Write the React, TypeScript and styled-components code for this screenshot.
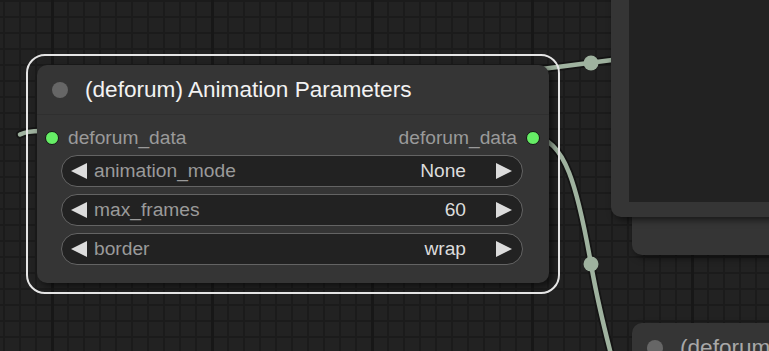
import styled, { createGlobalStyle } from 'styled-components';

const GlobalStyle = createGlobalStyle`
  html, body {
    margin: 0;
    padding: 0;
    background: #222;
  }
  body {
    font-family: 'Liberation Sans', Arial, sans-serif;
  }
`;

const LINK = '#9fb29f';
const LINK_BORDER = '#141414';

type Widget = { label: string; value: string };

const widgets: Widget[] = [
  { label: 'animation_mode', value: 'None' },
  { label: 'max_frames', value: '60' },
  { label: 'border', value: 'wrap' },
];

function Arrow({ dir }: { dir: 'left' | 'right' }) {
  return (
    <ArrowIcon viewBox="0 0 16 16">
      {dir === 'left' ? <polygon points="16,0 16,16 0,8" /> : <polygon points="0,0 0,16 16,8" />}
    </ArrowIcon>
  );
}

function Link({ d }: { d: string }) {
  return (
    <g fill="none" strokeLinecap="round">
      <path d={d} stroke={LINK_BORDER} strokeWidth={8} />
      <path d={d} stroke={LINK} strokeWidth={4.5} />
    </g>
  );
}

export default function App() {
  return (
    <>
      <GlobalStyle />
      <Canvas>
        <Links viewBox="0 0 769 351">
          <Link d="M 20 134.5 Q 28 130.5 44 131" />
          <Link d="M 538 69.5 L 616 59.5" />
          <Link d="M 533 137 C 565 137, 578 190, 591 264 C 598 305, 606 335, 613 362" />
          <circle cx={591} cy={63} r={7.5} fill={LINK} />
          <circle cx={591} cy={264} r={7.5} fill={LINK} />
        </Links>

        {/* image node on the right, with the one behind it */}
        <BackNode />
        <PreviewNode>
          <PreviewImage />
        </PreviewNode>

        <Node $x={632} $y={323} $w={320}>
          <TitleBar>
            <TitleDot />
            <TitleText>(deforum) Prompt</TitleText>
          </TitleBar>
        </Node>

        <Node $x={37} $y={65} $w={512}>
          <SelectionOutline />
          <TitleBar>
            <TitleDot />
            <TitleText $selected>(deforum) Animation Parameters</TitleText>
          </TitleBar>
          <SlotRow>
            <Slot>
              <SlotDot />
              deforum_data
            </Slot>
            <Slot>
              deforum_data
              <SlotDot />
            </Slot>
          </SlotRow>
          <WidgetList>
            {widgets.map((w) => (
              <WidgetRow key={w.label}>
                <Arrow dir="left" />
                <WidgetLabel>{w.label}</WidgetLabel>
                <WidgetValue>{w.value}</WidgetValue>
                <Arrow dir="right" />
              </WidgetRow>
            ))}
          </WidgetList>
        </Node>
      </Canvas>
    </>
  );
}

const Canvas = styled.div`
  position: relative;
  width: 769px;
  height: 351px;
  overflow: hidden;
  background-color: #222;
  background-image:
    linear-gradient(to right, #171717 3px, transparent 3px),
    linear-gradient(to right, #1b1b1b 2px, transparent 2px),
    linear-gradient(to bottom, #1b1b1b 2px, transparent 2px);
  background-size: 160px 100%, 16px 16px, 16px 16px;
  background-position: 51px 0, 3px 0, 0 0;
`;

const Links = styled.svg`
  position: absolute;
  inset: 0;
  width: 100%;
  height: 100%;
`;

const Node = styled.div<{ $x: number; $y: number; $w: number }>`
  position: absolute;
  left: ${(p) => p.$x}px;
  top: ${(p) => p.$y}px;
  width: ${(p) => p.$w}px;
  display: flex;
  flex-direction: column;
  background: #353535;
  border-radius: 10px;
  box-shadow: 3px 3px 7px rgba(0, 0, 0, 0.55);
`;

const SelectionOutline = styled.div`
  position: absolute;
  inset: -11px;
  border: 2px solid #e6e6e6;
  border-radius: 19px;
  pointer-events: none;
`;

const TitleBar = styled.div`
  height: 50px;
  display: flex;
  align-items: center;
  gap: 17px;
  padding-left: 15px;
  border-bottom: 1px solid #2f2f2f;
  box-sizing: border-box;
`;

const TitleDot = styled.div`
  width: 16px;
  height: 16px;
  border-radius: 50%;
  background: #666;
  flex-shrink: 0;
`;

const TitleText = styled.div<{ $selected?: boolean }>`
  font-size: 22.6px;
  color: ${(p) => (p.$selected ? '#f2f2f2' : '#a8a8a8')};
  white-space: nowrap;
`;

const SlotRow = styled.div`
  margin-top: 7px;
  height: 32px;
  display: flex;
  align-items: center;
  justify-content: space-between;
  padding: 0 9px 0 8px;
`;

const Slot = styled.div`
  display: flex;
  align-items: center;
  gap: 9px;
  font-size: 19.2px;
  color: #9a9a9a;
`;

const SlotDot = styled.div`
  width: 14px;
  height: 14px;
  box-sizing: border-box;
  border-radius: 50%;
  background: #66ee66;
  border: 1.5px solid #151515;
`;

const WidgetList = styled.div`
  display: flex;
  flex-direction: column;
  gap: 7px;
  margin: 1px 26px 0 24px;
  padding-bottom: 18px;
`;

const WidgetRow = styled.div`
  height: 32px;
  box-sizing: border-box;
  display: flex;
  align-items: center;
  padding: 0 10px 0 9px;
  background: #222;
  border: 1px solid #646464;
  border-radius: 16px;
  font-size: 19.2px;
`;

const ArrowIcon = styled.svg`
  width: 16px;
  height: 16px;
  flex-shrink: 0;
  fill: #dcdcdc;
`;

const WidgetLabel = styled.span`
  flex: 1;
  margin-left: 7px;
  color: #9a9a9a;
`;

const WidgetValue = styled.span`
  margin-right: 30px;
  color: #dcdcdc;
`;

const PreviewNode = styled.div`
  position: absolute;
  left: 611px;
  top: -40px;
  width: 220px;
  height: 257px;
  box-sizing: border-box;
  padding: 0 0 15px 18px;
  display: flex;
  background: #353535;
  border-radius: 10px;
  box-shadow: 3px 3px 7px rgba(0, 0, 0, 0.55);
`;

const PreviewImage = styled.div`
  flex: 1;
  background: #222;
`;

const BackNode = styled.div`
  position: absolute;
  left: 632px;
  top: 100px;
  width: 200px;
  height: 155px;
  background: #353535;
  border-radius: 10px;
  box-shadow: 3px 3px 7px rgba(0, 0, 0, 0.55);
`;
